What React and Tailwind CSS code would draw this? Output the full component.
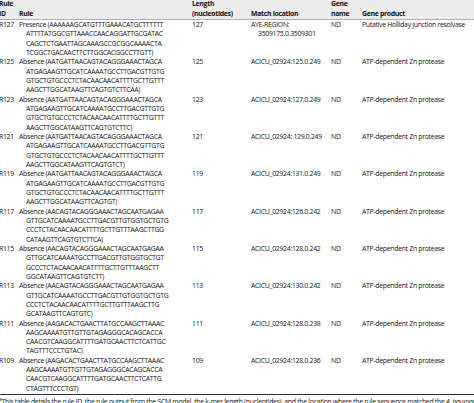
import React from 'react'

const rows = [
  {
    id: 'R127',
    rule: [
      'Presence (AAAAAAGCATGTTTGAAACATGCTTTTTT',
      'ATTTTATGGCGTTAAACCAACAGGATTGCGATAC',
      'CAGCTCTGAATTAGCAAAGCCGCGGCAAAACTA',
      'TCGGCTGACAACTTCTTGGCACGGCCTTGTT)',
    ],
    length: '127',
    match: ['AYE-REGION:', '3509175.0.3509301'],
    product: 'Putative Holliday junction resolvase',
  },
  {
    id: 'R125',
    rule: [
      'Absence (AATGATTAACAGTACAGGGAAACTAGCA',
      'ATGAGAAGTTGCATCAAAATGCCTTGACGTTGTG',
      'GTGCTGTGCCCTCTACAACAACATTTTGCTTGTTT',
      'AAGCTTGGCATAAGTTCAGTGTCTTCAA)',
    ],
    length: '125',
    match: ['ACICU_02924:125.0.249'],
  },
  {
    id: 'R123',
    rule: [
      'Absence (AATGATTAACAGTACAGGGAAACTAGCA',
      'ATGAGAAGTTGCATCAAAATGCCTTGACGTTGTG',
      'GTGCTGTGCCCTCTACAACAACATTTTGCTTGTTT',
      'AAGCTTGGCATAAGTTCAGTGTCTTC)',
    ],
    length: '123',
    match: ['ACICU_02924:127.0.249'],
  },
  {
    id: 'R121',
    rule: [
      'Absence (AATGATTAACAGTACAGGGAAACTAGCA',
      'ATGAGAAGTTGCATCAAAATGCCTTGACGTTGTG',
      'GTGCTGTGCCCTCTACAACAACATTTTGCTTGTTT',
      'AAGCTTGGCATAAGTTCAGTGTCT)',
    ],
    length: '121',
    match: ['ACICU_02924: 129.0.249'],
  },
  {
    id: 'R119',
    rule: [
      'Absence (AATGATTAACAGTACAGGGAAACTAGCA',
      'ATGAGAAGTTGCATCAAAATGCCTTGACGTTGTG',
      'GTGCTGTGCCCTCTACAACAACATTTTGCTTGTTT',
      'AAGCTTGGCATAAGTTCAGTGT)',
    ],
    length: '119',
    match: ['ACICU_02924:131.0.249'],
  },
  {
    id: 'R117',
    rule: [
      'Absence (AACAGTACAGGGAAACTAGCAATGAGAA',
      'GTTGCATCAAAATGCCTTGACGTTGTGGTGCTGTG',
      'CCCTCTACAACAACATTTTGCTTGTTTAAGCTTGG',
      'CATAAGTTCAGTGTCTTCA)',
    ],
    length: '117',
    match: ['ACICU_02924:126.0.242'],
  },
  {
    id: 'R115',
    rule: [
      'Absence (AACAGTACAGGGAAACTAGCAATGAGAA',
      'GTTGCATCAAAATGCCTTGACGTTGTGGTGCTGT',
      'GCCCTCTACAACAACATTTTGCTTGTTTAAGCTT',
      'GGCATAAGTTCAGTGTCTT)',
    ],
    length: '115',
    match: ['ACICU_02924:128.0.242'],
  },
  {
    id: 'R113',
    rule: [
      'Absence (AACAGTACAGGGAAACTAGCAATGAGAA',
      'GTTGCATCAAAATGCCTTGACGTTGTGGTGCTGTG',
      'CCCTCTACAACAACATTTTGCTTGTTTAAGCTTG',
      'GCATAAGTTCAGTGTC)',
    ],
    length: '113',
    match: ['ACICU_02924:130.0.242'],
  },
  {
    id: 'R111',
    rule: [
      'Absence (AAGACACTGAACTTATGCCAAGCTTAAAC',
      'AAGCAAAATGTTGTTGTAGAGGGCACAGCACCA',
      'CAACGTCAAGGCATTTTGATGCAACTTCTCATTGC',
      'TAGTTTCCCTGTAC)',
    ],
    length: '111',
    match: ['ACICU_02924:128.0.238'],
  },
  {
    id: 'R109',
    rule: [
      'Absence (AAGACACTGAACTTATGCCAAGCTTAAAC',
      'AAGCAAAATGTTGTTGTAGAGGGCACAGCACCA',
      'CAACGTCAAGGCATTTTGATGCAACTTCTCATTG',
      'CTAGTTTCCCTGT)',
    ],
    length: '109',
    match: ['ACICU_02924:128.0.236'],
  },
]

const cols = 'grid grid-cols-[20px_173px_59px_80px_31px_1fr]'

const App = () => {
  return (
    <div className="w-[474px] h-[403px] overflow-hidden bg-white">
      <div
        className="w-[560px] -mt-[1.5px] -ml-[1px] text-[6.9px] tracking-[-0.3px] font-medium text-[#161616] whitespace-nowrap"
        style={{ fontFamily: '"Open Sans", "Noto Sans", sans-serif' }}
      >
        {/* Header */}
        <div className={`${cols} bg-[#ececec] border-b border-[#b0b0b0] leading-[10px] font-bold text-[#111] pb-[0.5px]`}>
          <div className="flex flex-col">
            <span>Rule</span>
            <span>ID</span>
          </div>
          <div className="flex flex-col justify-end">
            <span>Rule</span>
          </div>
          <div className="flex flex-col">
            <span>Length</span>
            <span>(nucleotides)</span>
          </div>
          <div className="flex flex-col justify-end">
            <span>Match location</span>
          </div>
          <div className="flex flex-col">
            <span>Gene</span>
            <span>name</span>
          </div>
          <div className="flex flex-col justify-end">
            <span>Gene product</span>
          </div>
        </div>

        {/* Body */}
        <div className="leading-[9.33px]">
          {rows.map((row) => (
            <div key={row.id} className={cols}>
              <div>{row.id}</div>
              <div className="flex flex-col">
                {row.rule.map((line, i) => (
                  <span key={i} className={i > 0 ? 'pl-[7px]' : ''}>
                    {line}
                  </span>
                ))}
              </div>
              <div>{row.length}</div>
              <div className="flex flex-col">
                {row.match.map((line, i) => (
                  <span key={i} className={i > 0 ? 'pl-[7px]' : ''}>
                    {line}
                  </span>
                ))}
              </div>
              <div>ND</div>
              <div>{row.product || 'ATP-dependent Zn protease'}</div>
            </div>
          ))}
        </div>

        {/* Footnote */}
        <div className="mt-[1px] border-t-[1.5px] border-[#333] pt-[1.5px] leading-[9.33px]">
          <sup className="text-[5px]">a</sup>This table details the rule ID, the rule output from the SCM model, the k-mer length
          (nucleotides), and the location where the rule sequence matched the <i>A. baumannii</i> AYE
        </div>
      </div>
    </div>
  )
}

export default App
